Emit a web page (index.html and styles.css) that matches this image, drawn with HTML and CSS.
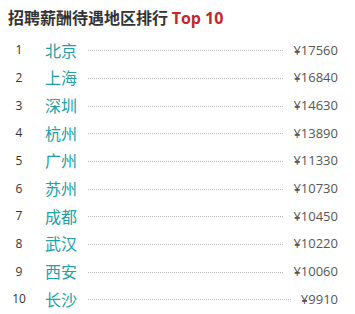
FILE: index.html
```html
<!DOCTYPE html>
<html lang="zh">
<head>
<meta charset="utf-8">
<link rel="stylesheet" href="styles.css">
</head>
<body>
<div class="panel">
  <h1 class="title">招聘薪酬待遇地区排行 <span class="accent">Top 10</span></h1>
  <ol class="list">
    <li class="row"><span class="rank">1</span><span class="city">北京</span><span class="dots"></span><span class="price">¥17560</span></li>
    <li class="row"><span class="rank">2</span><span class="city">上海</span><span class="dots"></span><span class="price">¥16840</span></li>
    <li class="row"><span class="rank">3</span><span class="city">深圳</span><span class="dots"></span><span class="price">¥14630</span></li>
    <li class="row"><span class="rank">4</span><span class="city">杭州</span><span class="dots"></span><span class="price">¥13890</span></li>
    <li class="row"><span class="rank">5</span><span class="city">广州</span><span class="dots"></span><span class="price">¥11330</span></li>
    <li class="row"><span class="rank">6</span><span class="city">苏州</span><span class="dots"></span><span class="price">¥10730</span></li>
    <li class="row"><span class="rank">7</span><span class="city">成都</span><span class="dots"></span><span class="price">¥10450</span></li>
    <li class="row"><span class="rank">8</span><span class="city">武汉</span><span class="dots"></span><span class="price">¥10220</span></li>
    <li class="row"><span class="rank">9</span><span class="city">西安</span><span class="dots"></span><span class="price">¥10060</span></li>
    <li class="row"><span class="rank">10</span><span class="city">长沙</span><span class="dots"></span><span class="price">¥9910</span></li>
  </ol>
</div>
</body>
</html>
```

FILE: styles.css
```css
html, body {
  margin: 0;
  padding: 0;
  background: #fff;
}
body {
  font-family: "Open Sans", "Noto Sans CJK SC", sans-serif;
  color: #333;
}
.panel {
  width: 355px;
  padding: 6px 0 0 0;
  box-sizing: border-box;
}
.title {
  margin: 0 0 0 8px;
  font-size: 16px;
  font-weight: bold;
  line-height: 22px;
  color: #333;
  font-family: "Noto Sans CJK SC", sans-serif;
}
.accent {
  color: #c1272d;
  font-family: "Open Sans", sans-serif;
  font-weight: 700;
  font-size: 16px;
}
.list {
  list-style: none;
  margin: 7px 0 0 0;
  padding: 0 17px 0 0;
}
.row {
  display: flex;
  align-items: center;
  height: 27.67px;
}
.rank {
  width: 38px;
  text-align: center;
  font-size: 12px;
  color: #333;
}
.city {
  margin-left: 7px;
  font-family: "Noto Sans CJK SC", sans-serif;
  font-size: 16px;
  color: #22a1a4;
}
.dots {
  flex: 1;
  margin: 2px 10px 0 11px;
  border-top: 1px dotted #bbb;
}
.price {
  font-size: 13px;
  color: #555;
}
```
